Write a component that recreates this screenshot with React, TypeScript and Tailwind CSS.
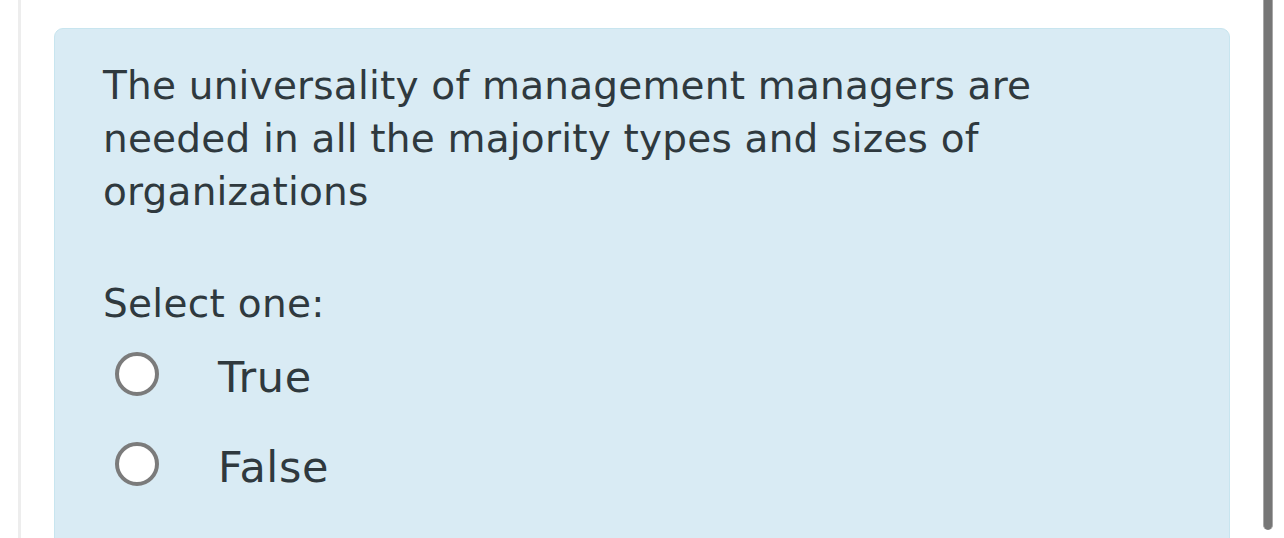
export default function App() {
  return (
    <div className="flex h-[538px] w-[1284px] items-start overflow-hidden bg-white font-['DejaVu_Sans',Verdana,sans-serif] text-[#2f393e]">
      {/* page edge line */}
      <div className="ml-[18px] h-full w-[3px] bg-[#ededed]" />

      {/* question card */}
      <div className="ml-[33px] mt-[28px] h-[560px] w-[1176px] rounded-[9px] border border-[#c8e5ef] bg-[#d9ebf4] pl-[48px] pt-[30px]">
        <p className="text-[39px] leading-[53px] tracking-[0.2px]">
          The universality of management managers are
          <br />
          needed in all the majority types and sizes of
          <br />
          organizations
        </p>

        <p className="mt-[59px] text-[39px] leading-[53px] tracking-[0.3px]">Select one:</p>

        <div className="mt-[2px] flex flex-col">
          {["True", "False"].map((label) => (
            <div key={label} className="flex h-[90px] items-center">
              <span className="ml-[12px] h-[44px] w-[44px] -translate-y-[3px] rounded-full border-[4px] border-[#7b7b7b] bg-white" />
              <span className="ml-[59px] text-[43px] leading-none tracking-[0.6px]">{label}</span>
            </div>
          ))}
        </div>
      </div>

      {/* scrollbar */}
      <div className="ml-[33px] h-[530px] w-[10px] rounded-b-full border-x border-[#a8a8a8] bg-[#767676]" />
    </div>
  );
}
